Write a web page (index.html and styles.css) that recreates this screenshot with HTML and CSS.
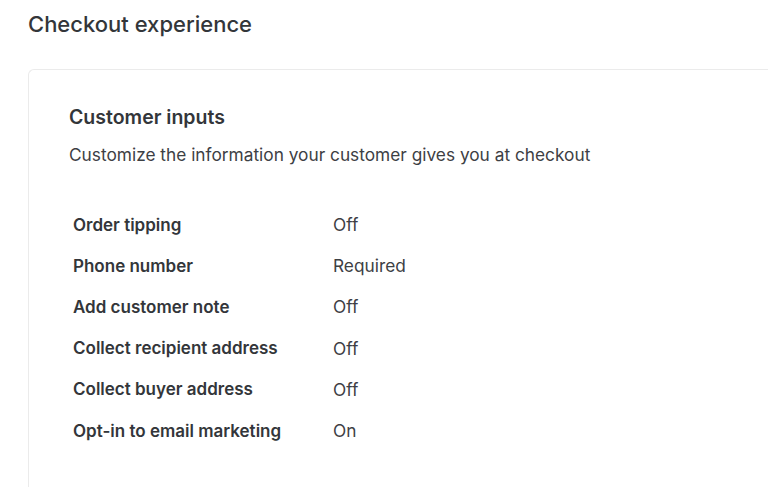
FILE: index.html
```html
<!DOCTYPE html>
<html>
<head>
<meta charset="utf-8">
<link rel="stylesheet" href="styles.css">
</head>
<body>
<div class="page">
  <h1 class="page-title">Checkout experience</h1>
  <section class="card">
    <h2 class="card-title">Customer inputs</h2>
    <p class="card-desc">Customize the information your customer gives you at checkout</p>
    <div class="settings">
      <div class="row"><span class="label">Order tipping</span><span class="value">Off</span></div>
      <div class="row"><span class="label">Phone number</span><span class="value">Required</span></div>
      <div class="row"><span class="label">Add customer note</span><span class="value">Off</span></div>
      <div class="row"><span class="label">Collect recipient address</span><span class="value">Off</span></div>
      <div class="row"><span class="label">Collect buyer address</span><span class="value">Off</span></div>
      <div class="row"><span class="label">Opt-in to email marketing</span><span class="value">On</span></div>
    </div>
  </section>
</div>
</body>
</html>
```
FILE: styles.css
```css
html, body {
  margin: 0;
  padding: 0;
  background: #ffffff;
  overflow: hidden;
}
body {
  font-family: Inter, "Noto Sans", sans-serif;
  color: #373a3e;
}
.page {
  padding: 10px 0 0 28px;
  height: 477px;
  overflow: hidden;
}
.page-title {
  margin: 0;
  font-size: 22px;
  line-height: 28px;
  font-weight: 500;
  color: #33363a;
}
.card {
  margin-top: 31px;
  border: 1px solid #ebebeb;
  border-right: none;
  border-bottom: none;
  border-radius: 6px 0 0 0;
  padding: 34px 0 0 40px;
  height: 383px;
  box-sizing: content-box;
}
.card-title {
  margin: 0;
  font-size: 19.5px;
  line-height: 26px;
  font-weight: 600;
  color: #33363a;
}
.card-desc {
  margin: 12.5px 0 0 0;
  font-size: 17.3px;
  line-height: 24px;
  color: #3d4044;
}
.settings {
  margin-top: 37.5px;
  padding-left: 4px;
  display: flex;
  flex-direction: column;
}
.row {
  display: flex;
  height: 41.2px;
  align-items: center;
}
.label {
  width: 260px;
  font-size: 17px;
  font-weight: 600;
  color: #33363a;
}
.value {
  font-size: 17.3px;
  color: #3d4044;
}
```
